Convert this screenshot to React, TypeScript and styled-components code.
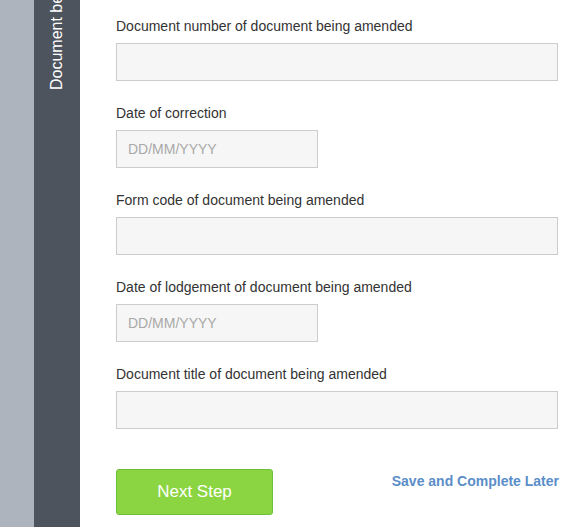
import React from "react";
import styled, { createGlobalStyle } from "styled-components";

const GlobalStyle = createGlobalStyle`
  html, body { margin: 0; padding: 0; background: #ffffff; }
  body { font-family: "Liberation Sans", Arial, sans-serif; color: #333333; }
  * { box-sizing: border-box; }
`;

const Page = styled.div`
  display: flex;
  min-height: 100vh;
  overflow: hidden;
`;

const OuterRail = styled.div`
  width: 34px;
  flex: 0 0 34px;
  background: #aeb4bd;
`;

const StepRail = styled.div`
  width: 46px;
  flex: 0 0 46px;
  background: #4e545e;
  display: flex;
  align-items: flex-start;
  padding-left: 13px;
`;

const StepTitle = styled.div`
  writing-mode: vertical-rl;
  transform: rotate(180deg);
  height: 90px;
  width: 20px;
  line-height: 20px;
  font-size: 16px;
  color: #ffffff;
  white-space: nowrap;
`;

const Main = styled.main`
  flex: 1;
  padding: 16px 29px 0 36px;
  display: flex;
  flex-direction: column;
`;

const Form = styled.form`
  display: flex;
  flex-direction: column;
  gap: 22px;
`;

const Field = styled.div`
  display: flex;
  flex-direction: column;
  gap: 7px;
`;

const Label = styled.label`
  font-size: 14px;
  line-height: 20px;
  color: #333333;
`;

const Input = styled.input<{ $narrow?: boolean }>`
  width: ${(p) => (p.$narrow ? "202px" : "100%")};
  height: 38px;
  background: #f6f6f6;
  border: 1px solid #cccccc;
  border-radius: 0;
  padding: 0 11px;
  font-family: "Liberation Sans", Arial, sans-serif;
  font-size: 14px;
  color: #333333;
  outline: none;
  &::placeholder {
    color: #a9a9a9;
  }
`;

const Footer = styled.div`
  display: flex;
  justify-content: space-between;
  align-items: flex-start;
  margin-top: 40px;
`;

const NextButton = styled.button`
  width: 157px;
  height: 46px;
  background: #8cd542;
  border: 1px solid #6ebf37;
  border-radius: 3px;
  color: #ffffff;
  font-family: "Liberation Sans", Arial, sans-serif;
  font-size: 17px;
  cursor: pointer;
`;

const SaveLink = styled.a`
  margin-top: 2px;
  margin-right: -1px;
  font-size: 14px;
  line-height: 20px;
  font-weight: bold;
  color: #5b8ec8;
  text-decoration: none;
  cursor: pointer;
`;

const fields: { label: string; date?: boolean }[] = [
  { label: "Document number of document being amended" },
  { label: "Date of correction", date: true },
  { label: "Form code of document being amended" },
  { label: "Date of lodgement of document being amended", date: true },
  { label: "Document title of document being amended" },
];

export default function App() {
  return (
    <>
      <GlobalStyle />
      <Page>
        <OuterRail />
        <StepRail>
          <StepTitle>Document being amended</StepTitle>
        </StepRail>
        <Main>
          <Form onSubmit={(e) => e.preventDefault()}>
            {fields.map((f, i) => (
              <Field key={i}>
                <Label htmlFor={`f${i}`}>{f.label}</Label>
                <Input
                  id={`f${i}`}
                  $narrow={f.date}
                  placeholder={f.date ? "DD/MM/YYYY" : ""}
                />
              </Field>
            ))}
          </Form>
          <Footer>
            <NextButton type="button">Next Step</NextButton>
            <SaveLink>Save and Complete Later</SaveLink>
          </Footer>
        </Main>
      </Page>
    </>
  );
}
